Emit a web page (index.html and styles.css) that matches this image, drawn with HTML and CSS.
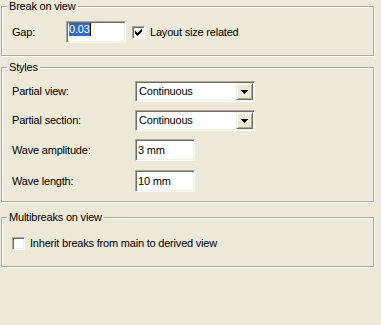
FILE: index.html
```html
<!DOCTYPE html>
<html lang="en">
<head>
    <meta charset="UTF-8">
    <link rel="stylesheet" href="styles.css">
</head>
<body>
    <div class="panel">
        <!-- Break on view -->
        <fieldset class="group group-break">
            <legend>Break on view</legend>
            <div class="group-body">
                <div class="row">
                    <span class="label label-gap">Gap:</span>
                    <div class="field field-gap"><span class="selected">0.03</span><span class="caret"></span></div>
                    <div class="check check-layout">
                        <span class="box">
                            <svg viewBox="0 0 7 7" width="7" height="7">
                                <path d="M0 2h1v1h1v1h1v-1h1v-1h1v-1h1v-1h1v3h-1v1h-1v1h-1v1h-1v1h-1v-1h-1v-1h-1z" fill="#000"/>
                            </svg>
                        </span>
                        <span>Layout size related</span>
                    </div>
                </div>
            </div>
        </fieldset>

        <!-- Styles -->
        <fieldset class="group group-styles">
            <legend>Styles</legend>
            <div class="group-body rows">
                <div class="row">
                    <span class="label">Partial view:</span>
                    <div class="combo">
                        <span class="combo-text">Continuous</span>
                        <span class="combo-button">
                            <svg viewBox="0 0 7 4" width="7" height="4">
                                <path d="M0 0h7v1h-1v1h-1v1h-1v1h-1v-1h-1v-1h-1v-1h-1z" fill="#000"/>
                            </svg>
                        </span>
                    </div>
                </div>
                <div class="row">
                    <span class="label">Partial section:</span>
                    <div class="combo">
                        <span class="combo-text">Continuous</span>
                        <span class="combo-button">
                            <svg viewBox="0 0 7 4" width="7" height="4">
                                <path d="M0 0h7v1h-1v1h-1v1h-1v1h-1v-1h-1v-1h-1v-1h-1z" fill="#000"/>
                            </svg>
                        </span>
                    </div>
                </div>
                <div class="row">
                    <span class="label">Wave amplitude:</span>
                    <div class="field">3 mm</div>
                </div>
                <div class="row row-last">
                    <span class="label">Wave length:</span>
                    <div class="field">10 mm</div>
                </div>
            </div>
        </fieldset>

        <!-- Multibreaks on view -->
        <fieldset class="group group-multi">
            <legend>Multibreaks on view</legend>
            <div class="group-body">
                <div class="check">
                    <span class="box"></span>
                    <span>Inherit breaks from main to derived view</span>
                </div>
            </div>
        </fieldset>
    </div>
</body>
</html>
```

FILE: styles.css
```css
body {
    margin: 0;
    background: #ece9d8;
    color: #000;
    font-family: "Liberation Sans", Arial, sans-serif;
    font-size: 11px;
    line-height: 13px;
    letter-spacing: -0.2px;
}

.panel {
    width: 381px;
    height: 325px;
    display: flex;
    flex-direction: column;
}

/* etched group box */
.group {
    margin: 0 0 0 1px;
    padding: 0;
    width: 373px;
    min-width: 0;
    box-sizing: border-box;
    border: 1px solid #aca899;
    box-shadow: inset 1px 1px 0 #fff, 1px 1px 0 #fff;
}

.group legend {
    margin-left: 5px;
    padding: 0 2px;
    line-height: 13px;
    background: #ece9d8;
}

.group-body {
    padding-left: 10px;
}

.group-break .group-body {
    padding-top: 8px;
    padding-bottom: 12px;
}

.group-styles {
    margin-top: 5px;
}

.group-styles .group-body {
    padding-top: 7px;
    padding-bottom: 9px;
}

.group-multi {
    margin-top: 9px;
}

.group-multi .group-body {
    padding-top: 13px;
    padding-bottom: 16px;
}

.rows {
    display: flex;
    flex-direction: column;
    gap: 8px;
}

.row {
    display: flex;
    align-items: center;
}

.row-last {
    margin-top: 1px;
}

.label {
    width: 123px;
    flex-shrink: 0;
}

.label-gap {
    width: 54px;
}

/* sunken edit box */
.field {
    width: 60px;
    height: 22px;
    box-sizing: border-box;
    background: #fff;
    border: 1px solid;
    border-color: #aca899 #fff #fff #aca899;
    box-shadow: inset 1px 1px 0 #716f64, inset -1px -1px 0 #f1efe2;
    padding: 1px 2px 0 2px;
    display: flex;
    align-items: center;
}

.field-gap {
    align-items: flex-start;
}

.selected {
    background: #316ac5;
    color: #fff;
}

.caret {
    width: 1px;
    height: 13px;
    background: #000;
}

/* combo box */
.combo {
    width: 120px;
    height: 21px;
    box-sizing: border-box;
    background: #fff;
    border: 1px solid;
    border-color: #aca899 #fff #fff #aca899;
    box-shadow: inset 1px 1px 0 #716f64, inset -1px -1px 0 #f1efe2;
    padding: 1px;
    display: flex;
    align-items: center;
}

.combo-text {
    flex: 1;
    padding-left: 2px;
}

.combo-button {
    width: 17px;
    height: 17px;
    box-sizing: border-box;
    background: #ece9d8;
    border: 1px solid;
    border-color: #f1efe2 #716f64 #716f64 #f1efe2;
    box-shadow: inset 1px 1px 0 #fff, inset -1px -1px 0 #aca899;
    display: flex;
    align-items: center;
    justify-content: center;
}

.combo-button svg {
    display: block;
}

/* checkbox */
.check {
    display: flex;
    align-items: center;
    gap: 5px;
}

.check-layout {
    margin-left: 6px;
}

.box {
    width: 13px;
    height: 13px;
    box-sizing: border-box;
    background: #fff;
    border: 1px solid;
    border-color: #aca899 #fff #fff #aca899;
    box-shadow: inset 1px 1px 0 #716f64, inset -1px -1px 0 #f1efe2;
    display: flex;
    align-items: center;
    justify-content: center;
}

.box svg {
    display: block;
}
```
